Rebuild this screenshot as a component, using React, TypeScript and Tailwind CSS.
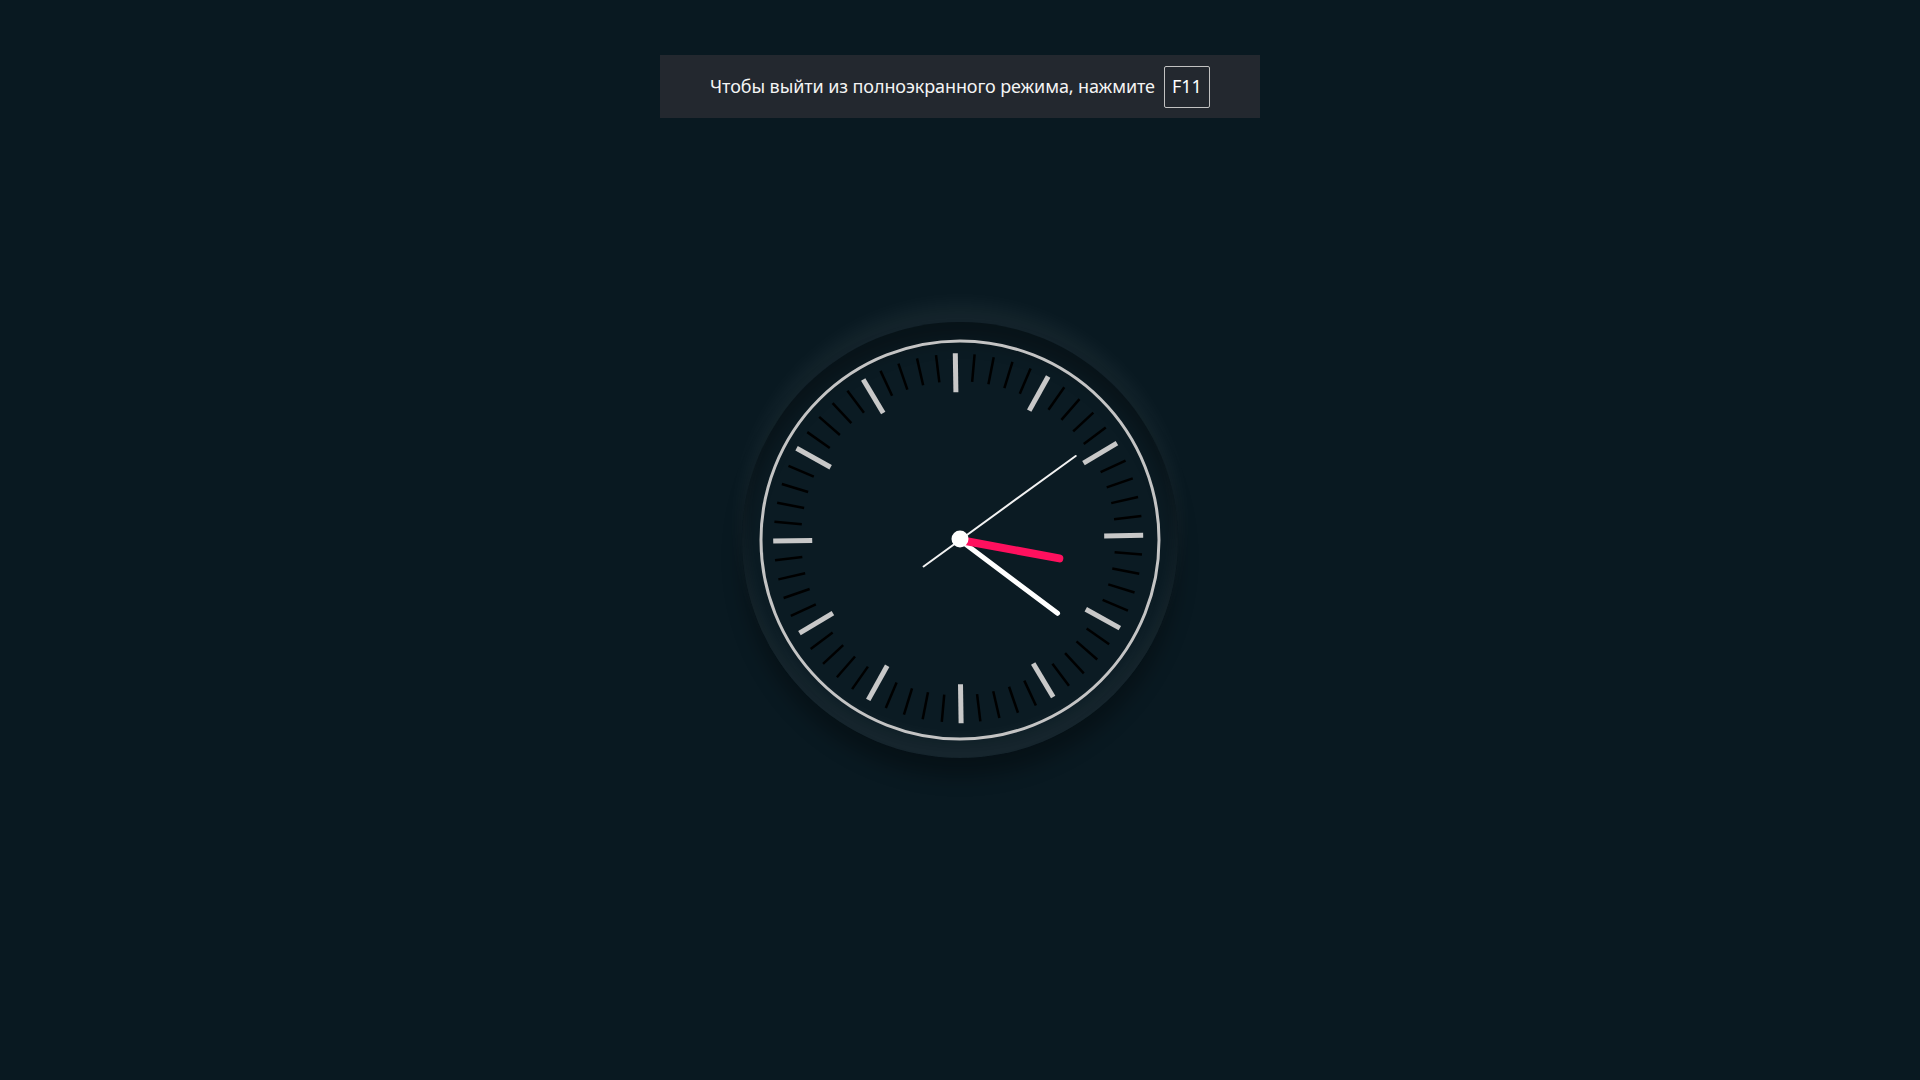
import React from 'react';

const SIZE = 436;
const C = SIZE / 2;

// time shown on the face: 3:21:09
const HOUR_DEG = 100.5;
const MIN_DEG = 126.9;
const SEC_DEG = 54;

const polar = (deg: number, r: number) => {
  const a = ((deg - 90) * Math.PI) / 180;
  return { x: C + r * Math.cos(a), y: C + r * Math.sin(a) };
};

const Hand: React.FC<{ deg: number; len: number; tail?: number; width: number; color: string }> = ({ deg, len, tail = 0, width, color }) => {
  const a = polar(deg, len);
  const b = polar(deg + 180, tail);
  return <line x1={b.x} y1={b.y} x2={a.x} y2={a.y} stroke={color} strokeWidth={width} strokeLinecap="round" />;
};

const ClockFace: React.FC = () => {
  const ticks = Array.from({ length: 60 }, (_, i) => i);

  return (
    <svg width={SIZE} height={SIZE} viewBox={`0 0 ${SIZE} ${SIZE}`} className="absolute inset-0">
      <circle cx={C} cy={C} r={199} fill="none" stroke="#c4c4c4" strokeWidth={3} />
      <g transform="translate(-1.8 -1.8) rotate(-0.9 218 218)">
        {ticks.map(i => {
          const major = i % 5 === 0;
          const p1 = polar(i * 6, major ? 146 : 157);
          const p2 = polar(i * 6, major ? 185 : 184.5);
          return (
            <line
              key={i}
              x1={p1.x}
              y1={p1.y}
              x2={p2.x}
              y2={p2.y}
              stroke={major ? '#c8c8c8' : '#000000'}
              strokeWidth={major ? 5 : 2.5}
            />
          );
        })}
      </g>
      <Hand deg={SEC_DEG} len={143} tail={45} width={2} color="#f2f2f2" />
      <Hand deg={MIN_DEG} len={122} width={5} color="#ffffff" />
      <Hand deg={HOUR_DEG} len={101} width={8} color="#ff105e" />
      <circle cx={C} cy={C - 1} r={8.5} fill="#ffffff" />
    </svg>
  );
};

export default function App() {
  return (
    <div className="relative w-full h-screen bg-[#091921] overflow-hidden flex items-center justify-center" style={{ fontFamily: '"Noto Sans", "Open Sans", sans-serif' }}>
      {/* fullscreen notice */}
      <div className="absolute top-[55px] left-1/2 -translate-x-1/2 h-[63px] w-[600px] bg-[#23282f] flex items-center justify-center gap-[9px]">
        <span className="text-[18px] text-[#f4f4f4] tracking-[-0.1px]">Чтобы выйти из полноэкранного режима, нажмите</span>
        <span className="w-[46px] h-[42px] border-[1.5px] border-[#c2c2c2] rounded-[2px] flex items-center justify-center text-[18px] text-white">
          F11
        </span>
      </div>

      {/* clock */}
      <div className="relative w-[436px] h-[436px] rounded-full bg-[#0b1b23] shadow-[0_-18px_20px_rgba(255,255,255,0.05),0_18px_20px_rgba(0,0,0,0.3),inset_0_-18px_18px_rgba(255,255,255,0.05),inset_0_18px_18px_rgba(0,0,0,0.3)]">
        <ClockFace />
      </div>
    </div>
  );
}
